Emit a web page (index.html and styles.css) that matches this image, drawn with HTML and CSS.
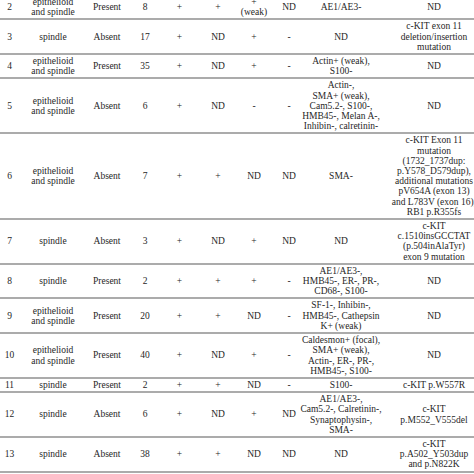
FILE: index.html
```html
<!DOCTYPE html>
<html>
<head>
<meta charset="utf-8">
<link rel="stylesheet" href="styles.css">
</head>
<body>
<div class="table">
  <div class="row"><div class="c">2</div><div class="c">epithelioid<br>and spindle</div><div class="c">Present</div><div class="c">8</div><div class="c">+</div><div class="c">+</div><div class="c">+<br>(weak)</div><div class="c">ND</div><div class="c">AE1/AE3-</div><div class="c">ND</div></div>
  <div class="row"><div class="c">3</div><div class="c">spindle</div><div class="c">Absent</div><div class="c">17</div><div class="c">+</div><div class="c">ND</div><div class="c">+</div><div class="c">-</div><div class="c">ND</div><div class="c">c-KIT exon 11<br>deletion/insertion<br>mutation</div></div>
  <div class="row"><div class="c">4</div><div class="c">epithelioid<br>and spindle</div><div class="c">Present</div><div class="c">35</div><div class="c">+</div><div class="c">ND</div><div class="c">+</div><div class="c">-</div><div class="c">Actin+ (weak),<br>S100-</div><div class="c">ND</div></div>
  <div class="row"><div class="c">5</div><div class="c">epithelioid<br>and spindle</div><div class="c">Absent</div><div class="c">6</div><div class="c">+</div><div class="c">ND</div><div class="c">-</div><div class="c">-</div><div class="c">Actin-,<br>SMA+ (weak),<br>Cam5.2-, S100-,<br>HMB45-, Melan A-,<br>Inhibin-, calretinin-</div><div class="c">ND</div></div>
  <div class="row"><div class="c">6</div><div class="c">epithelioid<br>and spindle</div><div class="c">Absent</div><div class="c">7</div><div class="c">+</div><div class="c">+</div><div class="c">ND</div><div class="c">ND</div><div class="c">SMA-</div><div class="c">c-KIT Exon 11<br>mutation<br>(1732_1737dup:<br>p.Y578_D579dup),<br>additional mutations<br>pV654A (exon 13)<br>and L783V (exon 16);<br>RB1 p.R355fs</div></div>
  <div class="row"><div class="c">7</div><div class="c">spindle</div><div class="c">Absent</div><div class="c">3</div><div class="c">+</div><div class="c">ND</div><div class="c">+</div><div class="c">ND</div><div class="c">ND</div><div class="c">c-KIT<br>c.1510insGCCTAT<br>(p.504inAlaTyr)<br>exon 9 mutation</div></div>
  <div class="row"><div class="c">8</div><div class="c">spindle</div><div class="c">Present</div><div class="c">2</div><div class="c">+</div><div class="c">+</div><div class="c">+</div><div class="c">-</div><div class="c">AE1/AE3-,<br>HMB45-, ER-, PR-,<br>CD68-, S100-</div><div class="c">ND</div></div>
  <div class="row"><div class="c">9</div><div class="c">epithelioid<br>and spindle</div><div class="c">Present</div><div class="c">20</div><div class="c">+</div><div class="c">+</div><div class="c">ND</div><div class="c">-</div><div class="c">SF-1-, Inhibin-,<br>HMB45-, Cathepsin<br>K+ (weak)</div><div class="c">ND</div></div>
  <div class="row"><div class="c">10</div><div class="c">epithelioid<br>and spindle</div><div class="c">Present</div><div class="c">40</div><div class="c">+</div><div class="c">ND</div><div class="c">+</div><div class="c">-</div><div class="c">Caldesmon+ (focal),<br>SMA+ (weak),<br>Actin-, ER-, PR-,<br>HMB45-, S100-</div><div class="c">ND</div></div>
  <div class="row"><div class="c">11</div><div class="c">spindle</div><div class="c">Present</div><div class="c">2</div><div class="c">+</div><div class="c">+</div><div class="c">ND</div><div class="c">-</div><div class="c">S100-</div><div class="c">c-KIT p.W557R</div></div>
  <div class="row"><div class="c">12</div><div class="c">spindle</div><div class="c">Absent</div><div class="c">6</div><div class="c">+</div><div class="c">ND</div><div class="c">+</div><div class="c">ND</div><div class="c">AE1/AE3-,<br>Cam5.2-, Calretinin-,<br>Synaptophysin-,<br>SMA-</div><div class="c">c-KIT<br>p.M552_V555del</div></div>
  <div class="row"><div class="c">13</div><div class="c">spindle</div><div class="c">Absent</div><div class="c">38</div><div class="c">+</div><div class="c">+</div><div class="c">ND</div><div class="c">ND</div><div class="c">ND</div><div class="c">c-KIT<br>p.A502_Y503dup<br>and p.N822K</div></div>
</div>
</body>
</html>
```
FILE: styles.css
```css
html, body {
  margin: 0;
  padding: 0;
  background: #ffffff;
  overflow: hidden;
}
.table {
  width: 496px;
  margin-top: -4px;
  font-family: "Liberation Serif", "Times New Roman", serif;
  font-size: 9.5px;
  line-height: 10.2px;
  color: #262626;
}
.row {
  display: grid;
  grid-template-columns: 19px 68px 40px 36px 33px 44px 28px 42px 62px 124px;
  border-bottom: 2px solid #ababab;
}
.c {
  display: flex;
  justify-content: center;
  align-items: center;
  text-align: center;
  white-space: nowrap;
  padding: 1px 0;
}
```
